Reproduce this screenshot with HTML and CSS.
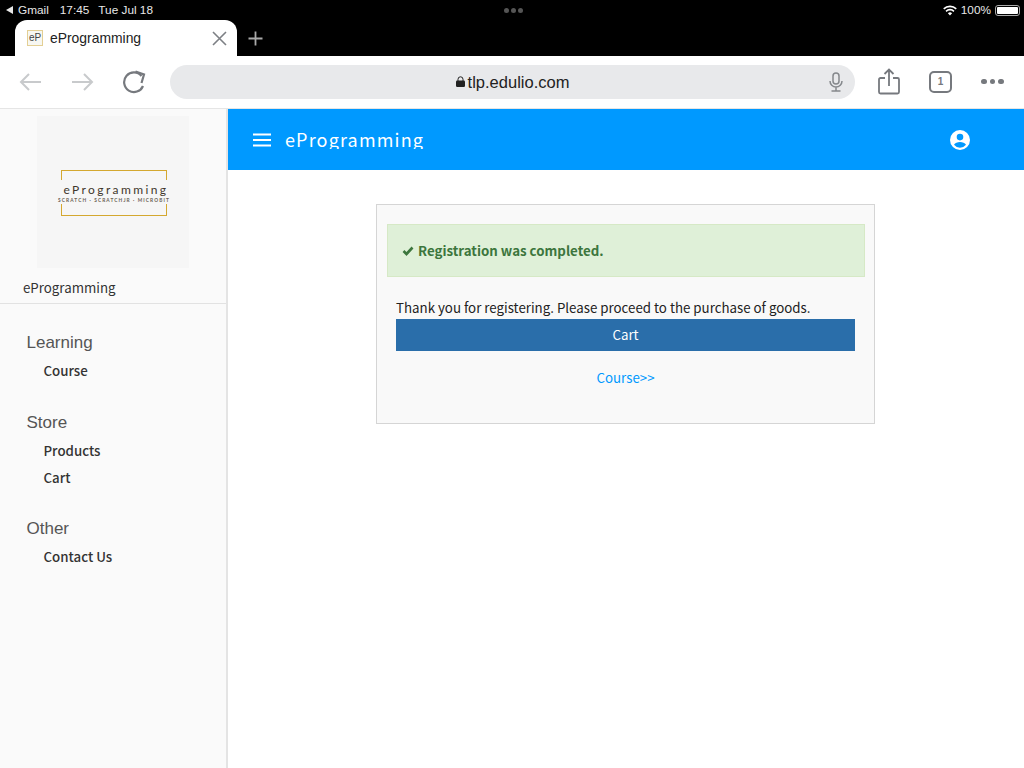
FILE: index.html
```html
<!DOCTYPE html>
<html lang="en">
<head>
<meta charset="utf-8">
<title>eProgramming</title>
<link rel="stylesheet" href="styles.css">
</head>
<body>
<div class="statusbar">
  <div class="status-left"><span class="back-tri"></span><span>Gmail</span><span class="time">17:45</span><span class="date">Tue Jul 18</span></div>
  <div class="status-dots"><i></i><i></i><i></i></div>
  <div class="status-right">
    <svg class="wifi" width="14" height="11" viewBox="0 0 14 11"><path d="M7 10.5 4.9 8.2a3 3 0 0 1 4.2 0zM3.6 6.9 2.5 5.7a6.4 6.4 0 0 1 9 0l-1.100 1.200a4.800 4.800 0 0 0-6.800 0zM1.300 4.500 .2 3.300a9.700 9.700 0 0 1 13.600 0l-1.100 1.200a8.100 8.100 0 0 0-11.400 0z" fill="#fff"/></svg>
    <span>100%</span>
    <span class="battery"><span class="battery-fill"></span></span>
  </div>
</div>
<div class="tabstrip">
  <div class="tab">
    <span class="favicon">eP</span>
    <span class="tab-title">eProgramming</span>
    <svg class="tab-close" width="15" height="15" viewBox="0 0 15 15"><path d="M1 1l13 13M14 1 1 14" stroke="#7d8085" stroke-width="1.600" fill="none"/></svg>
  </div>
  <svg class="tab-plus" width="15" height="15" viewBox="0 0 15 15"><path d="M7.500 .5v14M.5 7.500h14" stroke="#a9a9a9" stroke-width="1.800" fill="none"/></svg>
</div>
<div class="toolbar">
  <svg class="tool-back" width="23" height="18" viewBox="0 0 23 18"><path d="M22 9H2M10 1 2 9l8 8" stroke="#c8cacc" stroke-width="2" fill="none"/></svg>
  <svg class="tool-forward" width="23" height="18" viewBox="0 0 23 18"><path d="M1 9h20M13 1l8 8-8 8" stroke="#c8cacc" stroke-width="2" fill="none"/></svg>
  <svg class="tool-reload" width="24" height="24" viewBox="0 0 24 24"><path d="M21 16A9.800 9.800 0 1 1 19.500 6" stroke="#76797e" stroke-width="2.200" fill="none"/><path d="M13.500 1.500 22 4.500 19.500 13" stroke="#76797e" stroke-width="2.200" fill="none"/></svg>
  <div class="urlbar">
    <div class="url"><svg width="9" height="11" viewBox="0 0 9 11"><path d="M2 5V3.300a2.500 2.500 0 0 1 5 0V5" stroke="#222" fill="none"/><rect y="4.500" width="9" height="6.500" rx="1.200" fill="#222"/></svg><span>tlp.edulio.com</span></div>
    <svg class="mic" width="14" height="20" viewBox="0 0 14 20"><rect x="4" y="1" width="6" height="11" rx="3" fill="none" stroke="#85888c" stroke-width="1.500"/><path d="M1 9a6 6 0 0 0 12 0M7 15v3.500M2.500 19h9" stroke="#85888c" stroke-width="1.500" fill="none"/></svg>
  </div>
  <svg class="tool-share" width="22" height="27" viewBox="0 0 22 27"><path d="M7 10H2.500A1.500 1.500 0 0 0 1 11.500v12.500A1.500 1.500 0 0 0 2.500 25.500h17a1.500 1.500 0 0 0 1.500-1.500V11.500A1.500 1.500 0 0 0 19.500 10H15M11 18V1.500M6.500 6 11 1.500 15.500 6" stroke="#76797e" stroke-width="1.800" fill="none"/></svg>
  <div class="tab-count">1</div>
  <div class="more"><i></i><i></i><i></i></div>
</div>
<div class="app">
  <aside class="sidebar">
    <div class="brand">
      <div class="logo">
        <div class="logo-frame">
          <div class="logo-name">eProgramming</div>
          <div class="logo-sub">SCRATCH · SCRATCHJR · MICROBIT</div>
        </div>
      </div>
      <div class="brand-name">eProgramming</div>
    </div>
    <nav class="nav">
      <section class="nav-group">
        <h3>Learning</h3>
        <a>Course</a>
      </section>
      <section class="nav-group">
        <h3>Store</h3>
        <a>Products</a>
        <a>Cart</a>
      </section>
      <section class="nav-group">
        <h3>Other</h3>
        <a>Contact Us</a>
      </section>
    </nav>
  </aside>
  <div class="main">
    <header class="appbar">
      <div class="appbar-left">
        <svg width="18" height="14" viewBox="0 0 18 14"><path d="M0 1.500h18M0 7h18M0 12.500h18" stroke="#fff" stroke-width="2"/></svg>
        <span class="appbar-title">eProgramming</span>
      </div>
      <svg class="account" width="20" height="20" viewBox="0 0 20 20"><path fill="#fff" fill-rule="evenodd" d="M10 0a10 10 0 1 1 0 20 10 10 0 0 1 0-20zm0 3.800a3.300 3.300 0 1 0 0 6.600 3.300 3.300 0 0 0 0-6.600zm0 8.200c-2.600 0-4.900 1-6 2.700a7.600 7.600 0 0 0 12 0c-1.100-1.700-3.400-2.700-6-2.700z"/></svg>
    </header>
    <div class="content">
      <div class="card">
        <div class="alert">
          <svg width="12" height="10" viewBox="0 0 12 10"><path d="M1.500 5 4.500 8 10.500 1.500" stroke="#3c763d" stroke-width="2.600" fill="none"/></svg>
          <span>Registration was completed.</span>
        </div>
        <div class="card-body">
          <p>Thank you for registering. Please proceed to the purchase of goods.</p>
          <button class="cart-btn">Cart</button>
          <a class="course-link">Course&gt;&gt;</a>
        </div>
      </div>
    </div>
  </div>
</div>
</body>
</html>
```

FILE: styles.css
```css
* { box-sizing: border-box; }
html, body { margin: 0; height: 100%; overflow: hidden; }
body { width: 1024px; height: 768px; background: #fff; font-family: "Noto Sans CJK JP", "Noto Sans", sans-serif; display: flex; flex-direction: column; }

.statusbar { height: 20px; background: #000; color: #e8e8e8; font: 11.800px/18px "Liberation Sans", Arial, sans-serif; display: grid; grid-template-columns: 1fr auto 1fr; align-items: center; padding: 0 4px 0 6px; flex: none; }
.status-left { display: flex; align-items: center; }
.back-tri { width: 0; height: 0; border: 4px solid transparent; border-right: 7px solid #e8e8e8; border-left: 0; margin-right: 5px; }
.time { margin-left: 11px; }
.date { margin-left: 9px; }
.status-dots { display: flex; gap: 2px; }
.status-dots i, .more i { display: block; border-radius: 50%; }
.status-dots i { width: 5px; height: 5px; background: #555; }
.status-right { display: flex; align-items: center; justify-content: flex-end; gap: 4px; }
.battery { width: 25px; height: 11px; border: 1px solid #aaa; border-radius: 3px; padding: 1px; display: block; }
.battery-fill { display: block; height: 100%; background: #fff; border-radius: 1px; }

.tabstrip { height: 36px; background: #000; display: flex; align-items: flex-end; padding-left: 15px; flex: none; }
.tab { width: 222px; height: 36px; background: #fff; border-radius: 12px 12px 0 0; display: flex; align-items: center; padding: 0 10px 0 12px; }
.favicon { width: 16px; height: 16px; border: 1px solid #e3cf94; background: #f7f7f2; font: 10px/14px "Liberation Sans", sans-serif; color: #444; text-align: center; flex: none; }
.tab-title { font: 13.900px/18px "Liberation Sans", Arial, sans-serif; color: #222; margin-left: 7px; flex: 1; }
.tab-plus { margin: 0 0 10px 11px; }

.toolbar { height: 53px; background: #fff; display: flex; align-items: center; padding: 0 19px 1px 19px; flex: none; border-bottom: 1px solid #e5e5e5; }
.toolbar > svg { flex: none; }
.tool-forward { margin-left: 29px; }
.tool-reload { margin-left: 28px; }
.urlbar { width: 685px; height: 34px; margin-left: 24px; border-radius: 17px; background: #e8e9eb; display: flex; align-items: center; justify-content: center; position: relative; flex: none; }
.url { display: flex; align-items: center; gap: 3px; font: 16.500px/20px "Liberation Sans", Arial, sans-serif; color: #222; }
.mic { position: absolute; right: 12px; top: 7px; }
.tool-share { margin-left: 23px; }
.tab-count { width: 23px; height: 22px; margin-left: 29px; border: 2px solid #76797e; border-radius: 5px; color: #76797e; font: bold 10px/18px "Liberation Sans", sans-serif; text-align: center; flex: none; }
.more { display: flex; gap: 3px; margin-left: 29px; flex: none; }
.more i { width: 5.500px; height: 5.500px; background: #76797e; }

.app { flex: 1; display: flex; min-height: 0; }
.sidebar { width: 228px; flex: none; background: #fafafa; border-right: 2px solid #e4e4e4; }
.brand { height: 195px; padding: 7px 0 0; border-bottom: 1px solid #e2e2e2; }
.logo { width: 152px; height: 152px; margin-left: 37px; background: #f6f6f6; display: flex; align-items: center; justify-content: center; }
.logo-frame { width: 106px; height: 46px; border: 1.500px solid #d4a830; display: flex; flex-direction: column; align-items: center; justify-content: center; position: relative; margin: 1px 0 0 2px; }
.logo-frame::before { content: ""; position: absolute; left: -2px; right: -2px; height: 24px; top: 9px; background: #f6f6f6; }
.logo-name { position: relative; z-index: 1; font: 12px/12px Lato, sans-serif; letter-spacing: 2.400px; color: #3f372c; white-space: nowrap; margin: 3px -4px 0 0; }
.logo-sub { position: relative; z-index: 1; font: bold 4.800px/8px Lato, sans-serif; letter-spacing: 1.100px; color: #6b6255; white-space: nowrap; margin: 0 -8px; }
.brand-name { font-size: 13.300px; line-height: 20px; color: #333; margin: 10px 0 0 23px; }

.nav { padding: 27px 0 0 26.500px; }
.nav-group { margin-bottom: 29.500px; }
.nav-group h3 { margin: 0 0 6px; font: 400 17px/24px "Liberation Sans", Arial, sans-serif; color: #555; }
.nav-group a { display: block; margin: 0 0 7px 17px; font-size: 13.300px; line-height: 20px; font-weight: 500; color: #333; }

.main { flex: 1; min-width: 0; display: flex; flex-direction: column; }
.appbar { height: 61px; background: #0099ff; display: flex; align-items: center; justify-content: space-between; padding: 0 54px 0 25px; color: #fff; flex: none; }
.appbar-left { display: flex; align-items: center; gap: 14px; }
.appbar-title { font-size: 18px; letter-spacing: 1.150px; line-height: 24px; height: 22px; overflow: hidden; margin-bottom: 4px; }
.content { padding: 34px 0 0 148px; }
.card { width: 499px; height: 220px; background: #f9f9f9; border: 1px solid #d5d5d5; padding: 19px 9px 0 10px; }
.alert { height: 53px; background: #dff0d8; border: 1px solid #d6e9c6; color: #3c763d; font-size: 13.300px; font-weight: 700; line-height: 20px; display: flex; align-items: center; gap: 4px; padding: 0 14px; }
.card-body { padding: 21px 10px 0 9px; }
.card-body p { margin: 0 0 1px; font-size: 13.300px; line-height: 20px; color: #222; }
.cart-btn { display: block; width: 100%; height: 32px; background: #2a6eaa; border: 0; color: #fff; font: 400 13.300px/20px "Noto Sans CJK JP", sans-serif; }
.course-link { display: block; margin-top: 17px; text-align: center; font-size: 13.300px; line-height: 20px; color: #0099ff; }
```
